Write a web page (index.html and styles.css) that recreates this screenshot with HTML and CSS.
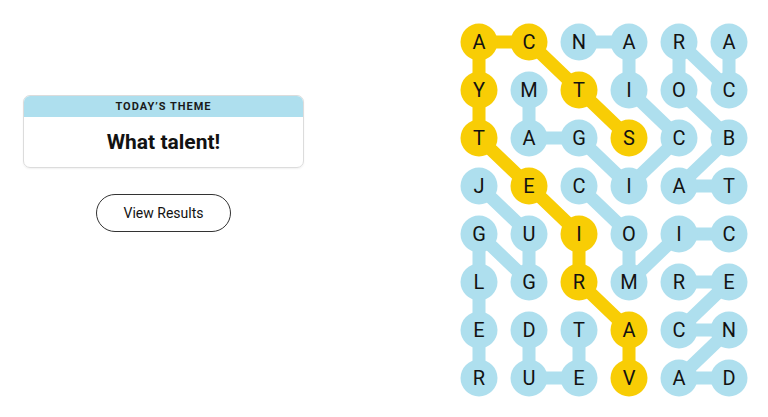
FILE: index.html
```html
<!DOCTYPE html>
<html>
<head>
<meta charset="utf-8">
<link rel="stylesheet" href="styles.css">
</head>
<body>
<main class="page">
  <section class="side">
    <div class="theme-card">
      <div class="theme-label">TODAY’S THEME</div>
      <div class="theme-title">What talent!</div>
    </div>
    <button class="results-btn">View Results</button>
  </section>
  <svg class="board" width="300" height="384" viewBox="0 0 300 384">
    <g class="links blue" stroke-linecap="round">
      <line x1="275" y1="24" x2="275" y2="72"/>
      <line x1="275" y1="72" x2="225" y2="24"/>
      <line x1="225" y1="24" x2="225" y2="72"/>
      <line x1="225" y1="72" x2="275" y2="120"/>
      <line x1="275" y1="120" x2="225" y2="168"/>
      <line x1="225" y1="168" x2="275" y2="168"/>

      <line x1="75" y1="72" x2="75" y2="120"/>
      <line x1="75" y1="120" x2="125" y2="120"/>
      <line x1="125" y1="120" x2="175" y2="168"/>
      <line x1="175" y1="168" x2="225" y2="120"/>
      <line x1="225" y1="120" x2="175" y2="72"/>
      <line x1="175" y1="72" x2="175" y2="24"/>
      <line x1="175" y1="24" x2="125" y2="24"/>

      <line x1="25" y1="168" x2="75" y2="216"/>
      <line x1="75" y1="216" x2="75" y2="264"/>
      <line x1="75" y1="264" x2="25" y2="216"/>
      <line x1="25" y1="216" x2="25" y2="264"/>
      <line x1="25" y1="264" x2="25" y2="312"/>
      <line x1="25" y1="312" x2="25" y2="360"/>

      <line x1="125" y1="168" x2="175" y2="216"/>
      <line x1="175" y1="216" x2="175" y2="264"/>
      <line x1="175" y1="264" x2="225" y2="216"/>
      <line x1="225" y1="216" x2="275" y2="216"/>

      <line x1="75" y1="312" x2="75" y2="360"/>
      <line x1="75" y1="360" x2="125" y2="360"/>
      <line x1="125" y1="360" x2="125" y2="312"/>

      <line x1="275" y1="360" x2="225" y2="360"/>
      <line x1="225" y1="360" x2="275" y2="312"/>
      <line x1="275" y1="312" x2="225" y2="312"/>
      <line x1="225" y1="312" x2="275" y2="264"/>
      <line x1="275" y1="264" x2="225" y2="264"/>
    </g>
    <g class="links gold" stroke-linecap="round">
      <line x1="175" y1="360" x2="175" y2="312"/>
      <line x1="175" y1="312" x2="125" y2="264"/>
      <line x1="125" y1="264" x2="125" y2="216"/>
      <line x1="125" y1="216" x2="75" y2="168"/>
      <line x1="75" y1="168" x2="25" y2="120"/>
      <line x1="25" y1="120" x2="25" y2="72"/>
      <line x1="25" y1="72" x2="25" y2="24"/>
      <line x1="25" y1="24" x2="75" y2="24"/>
      <line x1="75" y1="24" x2="125" y2="72"/>
      <line x1="125" y1="72" x2="175" y2="120"/>
    </g>
    <g class="dots">
      <circle class="gold" cx="25" cy="24" r="18.5"/><circle class="gold" cx="75" cy="24" r="18.5"/><circle class="blue" cx="125" cy="24" r="18.5"/><circle class="blue" cx="175" cy="24" r="18.5"/><circle class="blue" cx="225" cy="24" r="18.5"/><circle class="blue" cx="275" cy="24" r="18.5"/>
      <circle class="gold" cx="25" cy="72" r="18.5"/><circle class="blue" cx="75" cy="72" r="18.5"/><circle class="gold" cx="125" cy="72" r="18.5"/><circle class="blue" cx="175" cy="72" r="18.5"/><circle class="blue" cx="225" cy="72" r="18.5"/><circle class="blue" cx="275" cy="72" r="18.5"/>
      <circle class="gold" cx="25" cy="120" r="18.5"/><circle class="blue" cx="75" cy="120" r="18.5"/><circle class="blue" cx="125" cy="120" r="18.5"/><circle class="gold" cx="175" cy="120" r="18.5"/><circle class="blue" cx="225" cy="120" r="18.5"/><circle class="blue" cx="275" cy="120" r="18.5"/>
      <circle class="blue" cx="25" cy="168" r="18.5"/><circle class="gold" cx="75" cy="168" r="18.5"/><circle class="blue" cx="125" cy="168" r="18.5"/><circle class="blue" cx="175" cy="168" r="18.5"/><circle class="blue" cx="225" cy="168" r="18.5"/><circle class="blue" cx="275" cy="168" r="18.5"/>
      <circle class="blue" cx="25" cy="216" r="18.5"/><circle class="blue" cx="75" cy="216" r="18.5"/><circle class="gold" cx="125" cy="216" r="18.5"/><circle class="blue" cx="175" cy="216" r="18.5"/><circle class="blue" cx="225" cy="216" r="18.5"/><circle class="blue" cx="275" cy="216" r="18.5"/>
      <circle class="blue" cx="25" cy="264" r="18.5"/><circle class="blue" cx="75" cy="264" r="18.5"/><circle class="gold" cx="125" cy="264" r="18.5"/><circle class="blue" cx="175" cy="264" r="18.5"/><circle class="blue" cx="225" cy="264" r="18.5"/><circle class="blue" cx="275" cy="264" r="18.5"/>
      <circle class="blue" cx="25" cy="312" r="18.5"/><circle class="blue" cx="75" cy="312" r="18.5"/><circle class="blue" cx="125" cy="312" r="18.5"/><circle class="gold" cx="175" cy="312" r="18.5"/><circle class="blue" cx="225" cy="312" r="18.5"/><circle class="blue" cx="275" cy="312" r="18.5"/>
      <circle class="blue" cx="25" cy="360" r="18.5"/><circle class="blue" cx="75" cy="360" r="18.5"/><circle class="blue" cx="125" cy="360" r="18.5"/><circle class="gold" cx="175" cy="360" r="18.5"/><circle class="blue" cx="225" cy="360" r="18.5"/><circle class="blue" cx="275" cy="360" r="18.5"/>
    </g>
    <g class="letters" text-anchor="middle">
      <text x="25" y="31">A</text><text x="75" y="31">C</text><text x="125" y="31">N</text><text x="175" y="31">A</text><text x="225" y="31">R</text><text x="275" y="31">A</text>
      <text x="25" y="79">Y</text><text x="75" y="79">M</text><text x="125" y="79">T</text><text x="175" y="79">I</text><text x="225" y="79">O</text><text x="275" y="79">C</text>
      <text x="25" y="127">T</text><text x="75" y="127">A</text><text x="125" y="127">G</text><text x="175" y="127">S</text><text x="225" y="127">C</text><text x="275" y="127">B</text>
      <text x="25" y="175">J</text><text x="75" y="175">E</text><text x="125" y="175">C</text><text x="175" y="175">I</text><text x="225" y="175">A</text><text x="275" y="175">T</text>
      <text x="25" y="223">G</text><text x="75" y="223">U</text><text x="125" y="223">I</text><text x="175" y="223">O</text><text x="225" y="223">I</text><text x="275" y="223">C</text>
      <text x="25" y="271">L</text><text x="75" y="271">G</text><text x="125" y="271">R</text><text x="175" y="271">M</text><text x="225" y="271">R</text><text x="275" y="271">E</text>
      <text x="25" y="319">E</text><text x="75" y="319">D</text><text x="125" y="319">T</text><text x="175" y="319">A</text><text x="225" y="319">C</text><text x="275" y="319">N</text>
      <text x="25" y="367">R</text><text x="75" y="367">U</text><text x="125" y="367">E</text><text x="175" y="367">V</text><text x="225" y="367">A</text><text x="275" y="367">D</text>
    </g>
  </svg>
</main>
</body>
</html>
```

FILE: styles.css
```css
html, body {
  margin: 0;
  padding: 0;
  background: #ffffff;
}
body {
  font-family: "Roboto", "Liberation Sans", sans-serif;
  color: #121212;
}
.page {
  display: flex;
  align-items: flex-start;
  width: 768px;
  height: 417px;
}
.side {
  width: 327px;
  padding-top: 95px;
  display: flex;
  flex-direction: column;
  align-items: center;
}
.theme-card {
  width: 281px;
  box-sizing: border-box;
  border: 1px solid #dcdcdc;
  border-radius: 7px;
  overflow: hidden;
  box-shadow: 0 1px 2px rgba(0,0,0,0.06);
}
.theme-label {
  height: 21px;
  line-height: 22px;
  background: #aedfee;
  text-align: center;
  font-size: 11px;
  font-weight: 700;
  letter-spacing: 1px;
  color: #1a1a1a;
}
.theme-title {
  height: 50px;
  line-height: 50px;
  text-align: center;
  font-size: 21px;
  font-weight: 700;
  color: #121212;
}
.results-btn {
  margin-top: 26px;
  width: 135px;
  height: 38px;
  border: 1px solid #333333;
  border-radius: 19px;
  background: #ffffff;
  font-family: "Roboto", "Liberation Sans", sans-serif;
  font-size: 14px;
  color: #121212;
  padding: 0;
}
.board {
  margin-left: 127px;
  margin-top: 18px;
  display: block;
}
.links line {
  stroke-width: 13;
}
.links.blue line {
  stroke: #aedfee;
}
.links.gold line {
  stroke: #f8cd05;
}
.dots .blue {
  fill: #aedfee;
}
.dots .gold {
  fill: #f8cd05;
}
.letters text {
  font-family: "Roboto", "Liberation Sans", sans-serif;
  font-size: 20px;
  fill: #121212;
}
```
